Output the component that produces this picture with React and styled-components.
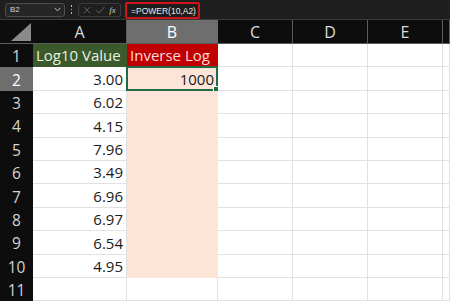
import React from "react";
import styled, { createGlobalStyle } from "styled-components";

const Global = createGlobalStyle`
  html, body { margin: 0; padding: 0; background: #ffffff; overflow: hidden; }
  body { font-family: "Open Sans", "Liberation Sans", sans-serif; }
`;

const Page = styled.div`
  width: 450px;
  height: 301px;
  overflow: hidden;
  display: flex;
  flex-direction: column;
  background: #ffffff;
`;

const FormulaBar = styled.div`
  height: 20px;
  background: #1f1f1f;
  display: flex;
  align-items: center;
  padding: 0 0 0 5px;
  box-sizing: border-box;
  border-bottom: 1px solid #3a3a3a;
`;

const NameBox = styled.div`
  width: 60px;
  height: 14px;
  box-sizing: border-box;
  border: 1px solid #4d4d4d;
  border-radius: 3px;
  background: #262626;
  display: flex;
  align-items: center;
  justify-content: space-between;
  padding: 0 3px 0 4px;
  color: #d6d6d6;
  font-family: "Liberation Sans", sans-serif;
  font-size: 8px;
`;

const Dots = styled.div`
  width: 13px;
  display: flex;
  flex-direction: column;
  align-items: center;
  gap: 2px;
  & > span {
    width: 1.5px;
    height: 1.5px;
    background: #bdbdbd;
    display: block;
  }
`;

const IconBox = styled.div`
  width: 43px;
  height: 14px;
  box-sizing: border-box;
  border: 1px solid #3d3d3d;
  border-radius: 3px;
  display: flex;
  align-items: center;
  justify-content: space-around;
  padding: 0 2px;
  margin-right: 4px;
`;

const Fx = styled.span`
  font-family: "Liberation Serif", serif;
  font-style: italic;
  font-size: 9px;
  color: #cfcfcf;
`;

const FormulaInput = styled.div`
  width: 75px;
  height: 17px;
  margin-top: 2px;
  box-sizing: border-box;
  border: 2px solid #d0141c;
  border-radius: 2px;
  background: #1d1d1d;
  display: flex;
  align-items: center;
  padding-left: 4px;
  color: #e8e8e8;
  font-family: "Liberation Sans", sans-serif;
  font-size: 8.5px;
`;

const Sheet = styled.div`
  display: grid;
  grid-template-columns: 33px 94px 91px 75px 75px 75px 7px;
  grid-template-rows: 24px repeat(11, 23.4px);
`;

const Corner = styled.div`
  background: #0d0d0d;
  border-bottom: 1px solid #5a5a5a;
  display: flex;
  align-items: flex-end;
  justify-content: flex-end;
  padding: 0 2px 2px 0;
  box-sizing: border-box;
`;

const ColHead = styled.div`
  background: ${(p) => (p.$active ? "#6e6e6e" : "#0d0d0d")};
  color: ${(p) => (p.$active ? "#ffffff" : "#dcdcdc")};
  border-bottom: 1px solid #5a5a5a;
  border-right: 1px solid ${(p) => (p.$active ? "#6e6e6e" : "#5c5c5c")};
  box-sizing: border-box;
  display: flex;
  align-items: center;
  justify-content: center;
  font-size: 16px;
  padding-top: 1px;
`;

const RowHead = styled.div`
  background: ${(p) => (p.$active ? "#6e6e6e" : "#0d0d0d")};
  color: ${(p) => (p.$active ? "#ffffff" : "#d4d4d4")};
  box-sizing: border-box;
  display: flex;
  align-items: center;
  justify-content: center;
  font-size: 15.5px;
  padding-top: 1px;
`;

const Cell = styled.div`
  position: relative;
  box-sizing: border-box;
  background: ${(p) => p.$bg || "#ffffff"};
  color: ${(p) => p.$color || "#1a1a1a"};
  border-right: 1px solid ${(p) => p.$line || "#e1e1e1"};
  border-bottom: 1px solid ${(p) => p.$line || "#e1e1e1"};
  display: flex;
  align-items: flex-end;
  justify-content: ${(p) => (p.$right ? "flex-end" : "flex-start")};
  padding: 0 3px 1px 3px;
  font-size: 15px;
  line-height: 20px;
  white-space: nowrap;
  overflow: visible;
`;

const Selection = styled.div`
  position: absolute;
  left: -1px;
  top: -1px;
  right: -1px;
  bottom: -1px;
  border: 2px solid #1f6b43;
  pointer-events: none;
`;

const Handle = styled.div`
  position: absolute;
  right: -4px;
  bottom: -4px;
  width: 5px;
  height: 5px;
  background: #1f6b43;
  border: 1px solid #ffffff;
`;

const values = ["3.00", "6.02", "4.15", "7.96", "3.49", "6.96", "6.97", "6.54", "4.95"];

export default function App() {
  const rows = [];
  rows.push(
    <React.Fragment key="r1">
      <RowHead>1</RowHead>
      <Cell $bg="#3b5a2b" $color="#e9f0e2" $line="#3b5a2b">Log10 Value</Cell>
      <Cell $bg="#c00000" $color="#fbdada" $line="#c00000">Inverse Log</Cell>
      <Cell />
      <Cell />
      <Cell />
      <Cell />
    </React.Fragment>
  );
  values.forEach((v, i) => {
    const r = i + 2;
    rows.push(
      <React.Fragment key={"r" + r}>
        <RowHead $active={r === 2}>{r}</RowHead>
        <Cell $right>{v}</Cell>
        <Cell $right $bg="#fce4d6" $line="#fce4d6">
          {r === 2 ? "1000" : ""}
          {r === 2 && (
            <Selection>
              <Handle />
            </Selection>
          )}
        </Cell>
        <Cell />
        <Cell />
        <Cell />
        <Cell />
      </React.Fragment>
    );
  });
  rows.push(
    <React.Fragment key="r11">
      <RowHead>11</RowHead>
      <Cell />
      <Cell />
      <Cell />
      <Cell />
      <Cell />
      <Cell />
    </React.Fragment>
  );

  return (
    <Page>
      <Global />
      <FormulaBar>
        <NameBox>
          <span>B2</span>
          <svg width="7" height="5" viewBox="0 0 7 5">
            <path d="M0.5 0.8 L3.5 3.8 L6.5 0.8" fill="none" stroke="#c8c8c8" strokeWidth="1" />
          </svg>
        </NameBox>
        <Dots>
          <span />
          <span />
          <span />
        </Dots>
        <IconBox>
          <svg width="8" height="8" viewBox="0 0 8 8">
            <path d="M1 1 L7 7 M7 1 L1 7" stroke="#5e5e5e" strokeWidth="1" />
          </svg>
          <svg width="9" height="8" viewBox="0 0 9 8">
            <path d="M0.5 4.5 L3.2 7 L8.5 0.8" fill="none" stroke="#5e5e5e" strokeWidth="1" />
          </svg>
          <Fx>fx</Fx>
        </IconBox>
        <FormulaInput>=POWER(10,A2)</FormulaInput>
      </FormulaBar>
      <Sheet>
        <Corner>
          <svg width="20" height="18" viewBox="0 0 20 18">
            <path d="M20 0 L20 18 L0 18 Z" fill="#8a8a8a" />
          </svg>
        </Corner>
        <ColHead>A</ColHead>
        <ColHead $active>B</ColHead>
        <ColHead>C</ColHead>
        <ColHead>D</ColHead>
        <ColHead>E</ColHead>
        <ColHead />
        {rows}
      </Sheet>
    </Page>
  );
}
